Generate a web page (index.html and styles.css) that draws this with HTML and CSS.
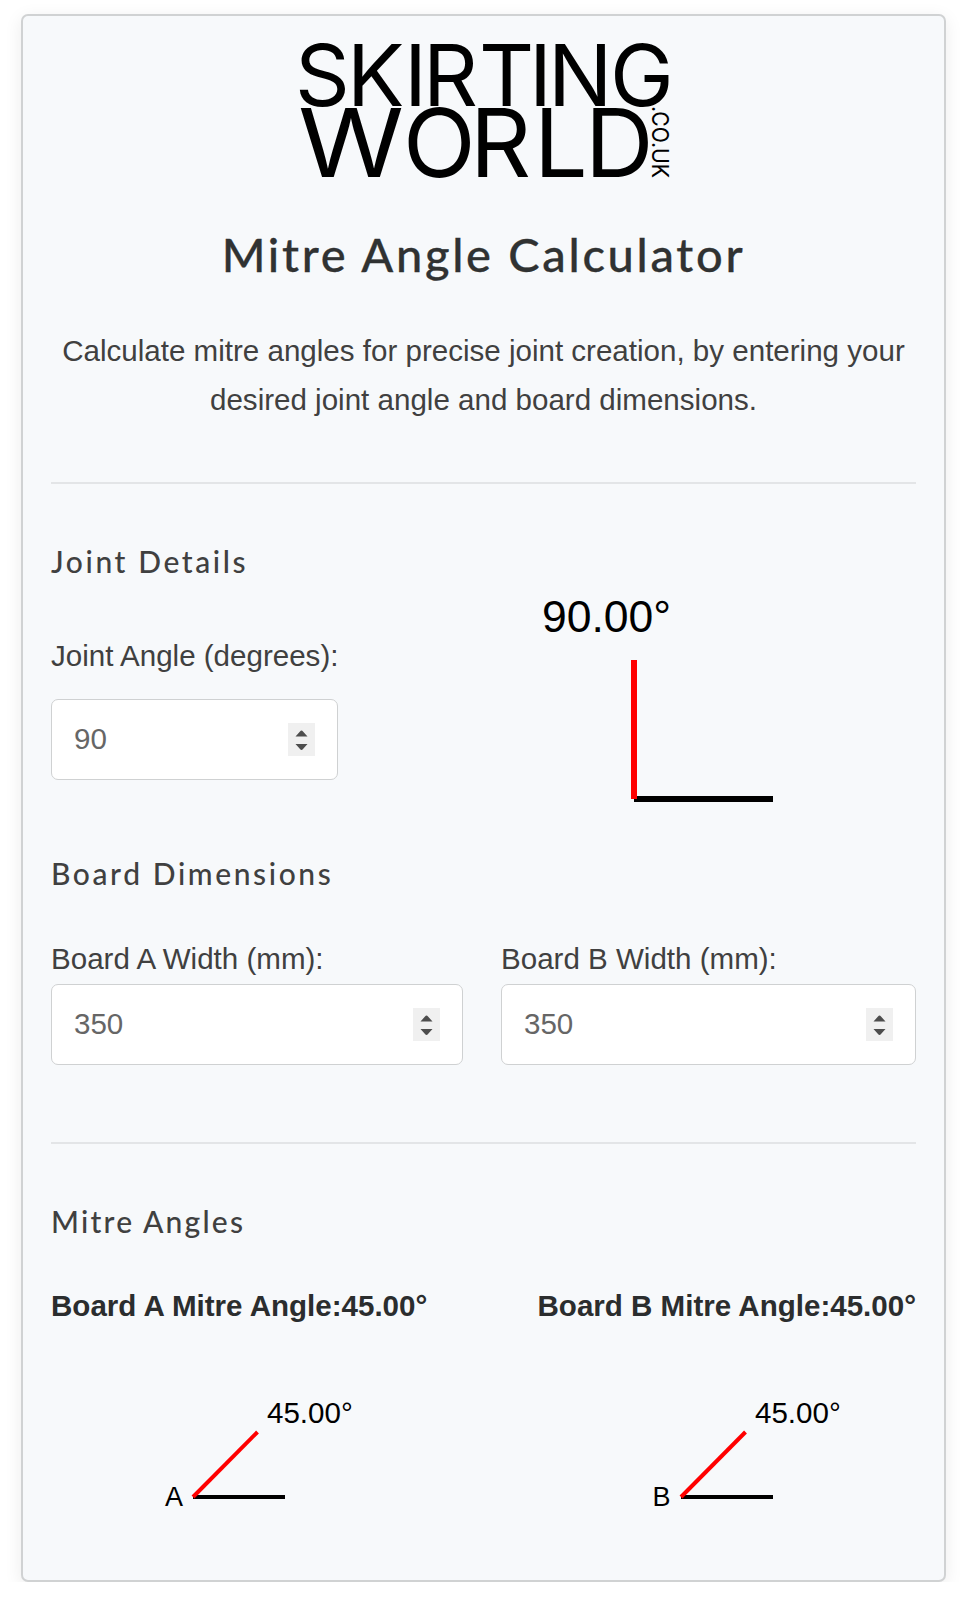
FILE: index.html
```
<!DOCTYPE html>
<html lang="en">
<head>
    <meta charset="UTF-8">
    <meta name="viewport" content="width=device-width, initial-scale=1.0">
    <title>Mitre Angle Calculator</title>
    <link rel="stylesheet" href="styles.css">
</head>
<body>
    <main class="calculator">
        <!-- logo -->
        <svg class="logo" viewBox="0 0 370 136" role="img" aria-label="Skirting World">
            <text class="logo-top" x="-4 48 105 124 180 230 249 311" y="62.5">SKIRTING</text>
            <text class="logo-bottom" y="134"><tspan x="-1" textLength="106" lengthAdjust="spacingAndGlyphs">W</tspan><tspan x="104 171 235 286">ORLD</tspan></text>
            <text class="logo-side" transform="translate(352.5 63) rotate(90)" textLength="72" lengthAdjust="spacingAndGlyphs">.CO.UK</text>
        </svg>

        <h1>Mitre Angle Calculator</h1>
        <p class="intro">Calculate mitre angles for precise joint creation, by entering your desired joint angle and board dimensions.</p>

        <hr>

        <!-- joint -->
        <section class="joint">
            <div class="joint-form">
                <h2>Joint Details</h2>
                <label for="jointAngle">Joint Angle (degrees):</label>
                <div class="field">
                    <input type="text" id="jointAngle" value="90">
                    <svg class="spinner" viewBox="0 0 27 33"><path d="M7.5 13.5 12 8.5Q13.5 6.5 15 8.5L19.5 13.5ZM7.5 21H19.5L15 26Q13.5 28 12 26Z"/></svg>
                </div>
            </div>
            <svg class="joint-diagram" viewBox="0 0 415 270">
                <line class="base" x1="133" y1="258" x2="272" y2="258"/>
                <line class="arm" x1="133" y1="258" x2="133" y2="119"/>
                <text x="41" y="91">90.00°</text>
            </svg>
        </section>

        <!-- boards -->
        <section class="boards">
            <h2>Board Dimensions</h2>
            <div class="board-row">
                <div>
                    <label for="boardA">Board A Width (mm):</label>
                    <div class="field">
                        <input type="text" id="boardA" value="350">
                        <svg class="spinner" viewBox="0 0 27 33"><path d="M7.5 13.5 12 8.5Q13.5 6.5 15 8.5L19.5 13.5ZM7.5 21H19.5L15 26Q13.5 28 12 26Z"/></svg>
                    </div>
                </div>
                <div>
                    <label for="boardB">Board B Width (mm):</label>
                    <div class="field">
                        <input type="text" id="boardB" value="350">
                        <svg class="spinner" viewBox="0 0 27 33"><path d="M7.5 13.5 12 8.5Q13.5 6.5 15 8.5L19.5 13.5ZM7.5 21H19.5L15 26Q13.5 28 12 26Z"/></svg>
                    </div>
                </div>
            </div>
        </section>

        <hr>

        <!-- results -->
        <section class="results">
            <h2>Mitre Angles</h2>
            <div class="result-row">
                <strong>Board A Mitre Angle:45.00°</strong>
                <strong>Board B Mitre Angle:45.00°</strong>
            </div>
            <div class="diagram-row">
                <svg class="mitre-diagram" viewBox="0 0 377 150">
                    <line class="base" x1="142" y1="127" x2="234" y2="127"/>
                    <line class="arm" x1="142" y1="127" x2="206.5" y2="62"/>
                    <text x="216" y="53">45.00°</text>
                    <text class="board-name" x="114" y="136">A</text>
                </svg>
                <svg class="mitre-diagram" viewBox="0 0 377 150">
                    <line class="base" x1="142" y1="127" x2="234" y2="127"/>
                    <line class="arm" x1="142" y1="127" x2="206.5" y2="62"/>
                    <text x="216" y="53">45.00°</text>
                    <text class="board-name" x="113.5" y="136">B</text>
                </svg>
            </div>
        </section>
    </main>
</body>
</html>
```
FILE: styles.css
```
*{
    box-sizing: border-box;
}
body{
    margin: 0;
    background: #fff;
    color: #404040;
    font-family: "Liberation Sans", Arial, sans-serif;
    font-size: 29.55px;
}

/* card */
.calculator{
    height: 1568px;
    margin: 14px 14px 0 21px;
    padding: 27px 28px 0;
    border: 2px solid #d0d2d3;
    border-radius: 7px;
    background: #f7f9fb;
    box-shadow: 0 4px 18px rgba(0, 0, 0, .08);
}
.logo{
    display: block;
    width: 370px;
    height: 136px;
    margin: 0 auto 45px;
    overflow: visible;
    font-family: Inter, sans-serif;
}
.logo-top{
    font-size: 85.5px;
}
.logo-bottom{
    font-size: 95px;
}
.logo-side{
    font-size: 23px;
}

h1, h2{
    margin: 0;
    font-family: Lato, sans-serif;
    font-weight: 500;
}
h1{
    height: 60px;
    margin-bottom: 42px;
    color: #303232;
    font-size: 47px;
    line-height: 60px;
    letter-spacing: 2.7px;
    text-align: center;
    -webkit-text-stroke: .3px #303232;
}
h2{
    height: 40px;
    font-size: 30px;
    line-height: 40px;
    letter-spacing: 2.6px;
}
.intro{
    margin: 0 0 58px;
    line-height: 49px;
    text-align: center;
}
hr{
    height: 2px;
    margin: 0;
    border: 0;
    background: #e3e5e7;
}

/* form */
label{
    display: block;
    line-height: 34px;
}
.field{
    display: flex;
    align-items: center;
    height: 81px;
    padding: 0 22.5px 0 22px;
    border: 1.5px solid #cfd1d2;
    border-radius: 7px;
    background: #fff;
}
.field input{
    flex: 1;
    min-width: 0;
    padding: 0 0 2px;
    border: 0;
    outline: 0;
    background: none;
    color: #666;
    font: inherit;
}
.spinner{
    width: 27px;
    height: 33px;
    background: #f0f0f0;
    fill: #4d4d4d;
}
.joint{
    display: grid;
    grid-template-columns: 413px 415px;
    gap: 37px;
    height: 312px;
    margin-top: 57px;
}
.joint-form label{
    margin: 58px 0 26px;
}
.joint-form .field{
    width: 287px;
}
.joint-diagram{
    width: 415px;
    height: 270px;
    font-size: 44.5px;
}
.board-row{
    display: grid;
    grid-template-columns: 412px 415px;
    gap: 38px;
    margin: 49px 0 77px;
}
.board-row label{
    margin-bottom: 8px;
}

/* diagrams */
.base{
    stroke: #000;
    stroke-width: 6px;
}
.arm{
    stroke: #f00;
    stroke-width: 6px;
}
.joint-diagram text, .mitre-diagram text{
    fill: #000;
}
.results{
    padding-top: 57px;
}
.results h2{
    letter-spacing: 2.2px;
}
.result-row{
    display: flex;
    justify-content: space-between;
    margin-top: 48px;
    color: #2b2d2e;
    line-height: 34px;
}
.diagram-row{
    display: flex;
    justify-content: space-between;
    margin-top: 47px;
}
.mitre-diagram{
    width: 377px;
    height: 150px;
}
.mitre-diagram line{
    stroke-width: 4px;
}
.mitre-diagram .board-name{
    font-size: 27px;
}
```
